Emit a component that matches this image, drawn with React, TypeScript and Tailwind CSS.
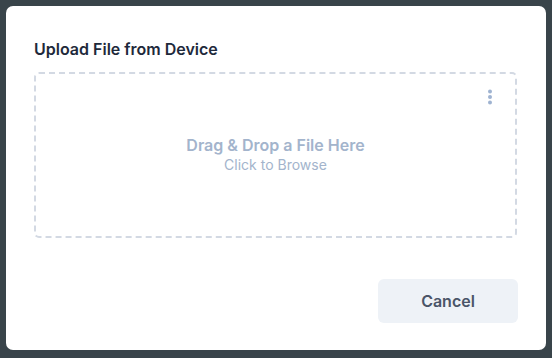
import React from "react";

export default function App() {
  return (
    <div className="w-[552px] h-[358px] bg-[#39444a] pt-[6px] px-[6px] pb-[8px] flex" style={{ fontFamily: "Inter, 'Noto Sans', sans-serif" }}>
      <div className="flex-1 bg-white rounded-[7px] pt-[32px] px-[28px] pb-[27px] flex flex-col">
        <h2 className="text-[16px] leading-[22px] font-semibold text-[#1e293b]">Upload File from Device</h2>
        <div className="relative mt-[12px] h-[166px] mr-[1px] border-2 border-dashed border-[#d3d9e3] rounded-[5px] flex flex-col items-center justify-center">
          <svg className="absolute right-[22px] top-[15px]" width="6" height="16" viewBox="0 0 6 16">
            <circle cx="3" cy="2.5" r="2" fill="#9fb3d1" />
            <circle cx="3" cy="8" r="2" fill="#9fb3d1" />
            <circle cx="3" cy="13.5" r="2" fill="#9fb3d1" />
          </svg>
          <div className="text-[16px] leading-[20px] font-semibold text-[#a3b4cc]">Drag &amp; Drop a File Here</div>
          <div className="text-[14px] leading-[20px] text-[#a3b4cc]">Click to Browse</div>
        </div>
        <div className="flex-1" />
        <div className="flex justify-end">
          <button className="w-[140px] h-[44px] rounded-[6px] bg-[#eef2f7] text-[16px] font-semibold text-[#4a5568]">Cancel</button>
        </div>
      </div>
    </div>
  );
}
